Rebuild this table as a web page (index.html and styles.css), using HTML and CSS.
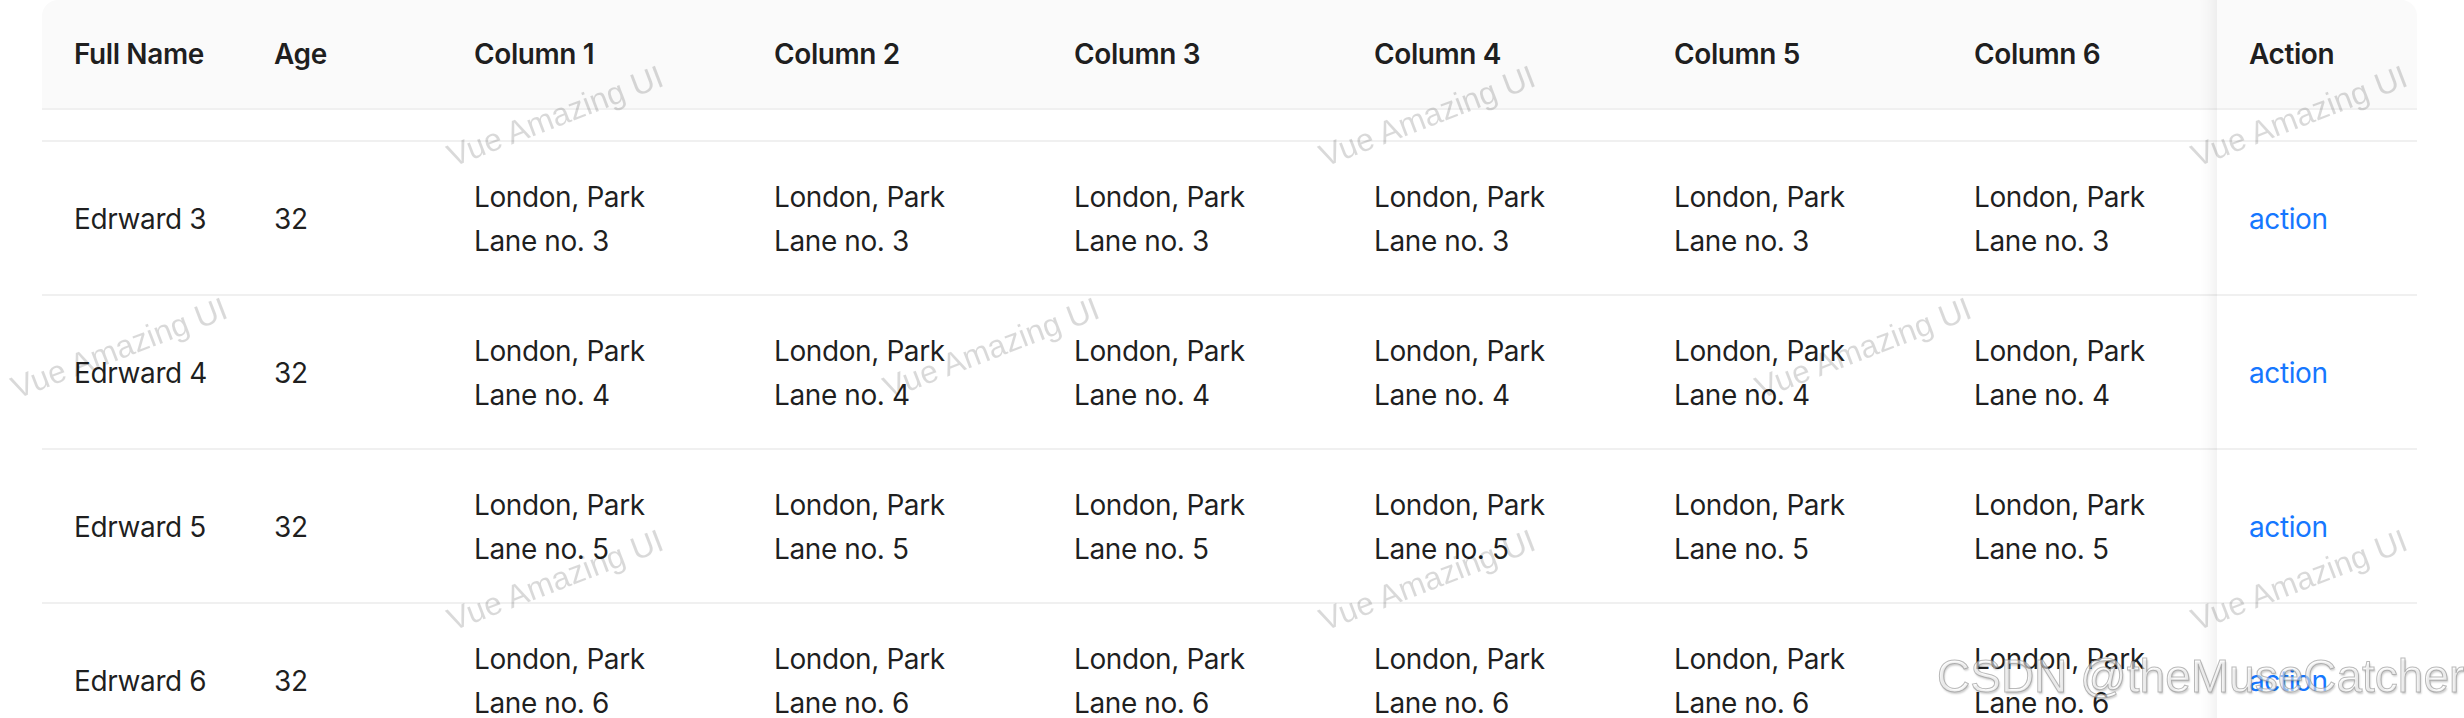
FILE: index.html
```html
<!DOCTYPE html>
<html lang="en">
<head>
<meta charset="utf-8">
<title>Table</title>
<link rel="stylesheet" href="styles.css">
</head>
<body>
<div class="page">
  <div class="table-wrap">
    <table class="table">
      <colgroup>
        <col class="w-200"><col class="w-200">
        <col class="w-300"><col class="w-300"><col class="w-300">
        <col class="w-300"><col class="w-300"><col class="w-300">
        <col class="w-200">
      </colgroup>
      <thead>
        <tr>
          <th>Full Name</th><th>Age</th>
          <th>Column 1</th><th>Column 2</th><th>Column 3</th>
          <th>Column 4</th><th>Column 5</th><th>Column 6</th>
          <th class="fixed-right">Action</th>
        </tr>
      </thead>
      <tbody>
        <tr class="measure-row">
          <td></td><td></td><td></td><td></td><td></td><td></td><td></td><td></td><td class="fixed-right"></td>
        </tr>
        <tr>
          <td>Edrward 3</td><td>32</td>
          <td>London, Park<br>Lane no. 3</td><td>London, Park<br>Lane no. 3</td><td>London, Park<br>Lane no. 3</td>
          <td>London, Park<br>Lane no. 3</td><td>London, Park<br>Lane no. 3</td><td>London, Park<br>Lane no. 3</td>
          <td class="fixed-right"><a class="link" href="#">action</a></td>
        </tr>
        <tr>
          <td>Edrward 4</td><td>32</td>
          <td>London, Park<br>Lane no. 4</td><td>London, Park<br>Lane no. 4</td><td>London, Park<br>Lane no. 4</td>
          <td>London, Park<br>Lane no. 4</td><td>London, Park<br>Lane no. 4</td><td>London, Park<br>Lane no. 4</td>
          <td class="fixed-right"><a class="link" href="#">action</a></td>
        </tr>
        <tr>
          <td>Edrward 5</td><td>32</td>
          <td>London, Park<br>Lane no. 5</td><td>London, Park<br>Lane no. 5</td><td>London, Park<br>Lane no. 5</td>
          <td>London, Park<br>Lane no. 5</td><td>London, Park<br>Lane no. 5</td><td>London, Park<br>Lane no. 5</td>
          <td class="fixed-right"><a class="link" href="#">action</a></td>
        </tr>
        <tr>
          <td>Edrward 6</td><td>32</td>
          <td>London, Park<br>Lane no. 6</td><td>London, Park<br>Lane no. 6</td><td>London, Park<br>Lane no. 6</td>
          <td>London, Park<br>Lane no. 6</td><td>London, Park<br>Lane no. 6</td><td>London, Park<br>Lane no. 6</td>
          <td class="fixed-right"><a class="link" href="#">action</a></td>
        </tr>
      </tbody>
    </table>
  </div>

  <div class="watermark" aria-hidden="true">
    <div class="wm-cell"></div><div class="wm-cell"><span class="wm-text">Vue Amazing UI</span></div>
    <div class="wm-cell"></div><div class="wm-cell"><span class="wm-text">Vue Amazing UI</span></div>
    <div class="wm-cell"></div><div class="wm-cell"><span class="wm-text">Vue Amazing UI</span></div>

    <div class="wm-cell"><span class="wm-text">Vue Amazing UI</span></div><div class="wm-cell"></div>
    <div class="wm-cell"><span class="wm-text">Vue Amazing UI</span></div><div class="wm-cell"></div>
    <div class="wm-cell"><span class="wm-text">Vue Amazing UI</span></div><div class="wm-cell"></div>

    <div class="wm-cell"></div><div class="wm-cell"><span class="wm-text">Vue Amazing UI</span></div>
    <div class="wm-cell"></div><div class="wm-cell"><span class="wm-text">Vue Amazing UI</span></div>
    <div class="wm-cell"></div><div class="wm-cell"><span class="wm-text">Vue Amazing UI</span></div>
  </div>

  <div class="csdn-mark">CSDN @theMuseCatcher</div>
</div>
</body>
</html>
```

FILE: styles.css
```css
html, body {
  margin: 0;
  padding: 0;
  background: #ffffff;
  overflow: hidden;
}

.page {
  position: relative;
  width: 2464px;
  height: 718px;
  overflow: hidden;
  font-family: Inter, "Noto Sans", "Liberation Sans", sans-serif;
  font-size: 28px;
  line-height: 44px;
  letter-spacing: -0.4px;
  color: rgba(0, 0, 0, 0.88);
}

.table-wrap {
  margin: 0 47px 0 42px;
  width: 2375px;
  overflow: hidden;
  border-radius: 16px 16px 0 0;
}

.table {
  width: 2400px;
  table-layout: fixed;
  border-collapse: separate;
  border-spacing: 0;
}

.w-200 { width: 200px; }
.w-300 { width: 300px; }

.table th,
.table td {
  padding: 32px;
  text-align: left;
  vertical-align: middle;
  border-bottom: 2px solid #f0f0f0;
  background: #ffffff;
  white-space: nowrap;
}

.table th {
  font-weight: 600;
  background: #fafafa;
}

.measure-row td {
  padding: 0;
  height: 30px;
}

.table tbody tr:not(.measure-row) td {
  padding-top: 33px;
  padding-bottom: 31px;
}

.fixed-right {
  position: sticky;
  right: 0;
  z-index: 2;
}

.fixed-right::after {
  content: "";
  position: absolute;
  top: 0;
  bottom: -2px;
  left: -60px;
  width: 60px;
  pointer-events: none;
  box-shadow: inset -20px 0 16px -16px rgba(5, 5, 5, 0.07);
}

.link {
  color: #1677ff;
  text-decoration: none;
}

.watermark {
  position: absolute;
  top: 0;
  left: -99px;
  display: grid;
  grid-template-columns: repeat(6, 436px);
  grid-auto-rows: 232px;
  pointer-events: none;
  z-index: 5;
}

.wm-cell {
  display: flex;
  align-items: center;
  justify-content: center;
}

.wm-text {
  font-family: "Liberation Sans", Arial, sans-serif;
  font-size: 32px;
  line-height: 32px;
  letter-spacing: 0;
  color: rgba(0, 0, 0, 0.15);
  white-space: nowrap;
  transform: rotate(-21deg);
}

.csdn-mark {
  position: absolute;
  left: 1937px;
  top: 648px;
  font-family: "Liberation Sans", Arial, sans-serif;
  font-size: 46px;
  line-height: 56px;
  letter-spacing: 0;
  white-space: nowrap;
  color: rgba(255, 255, 255, 0.55);
  -webkit-text-stroke: 1px rgba(140, 140, 140, 0.6);
  text-shadow: 1px 2px 2px rgba(0, 0, 0, 0.2);
  pointer-events: none;
  z-index: 6;
}
```
